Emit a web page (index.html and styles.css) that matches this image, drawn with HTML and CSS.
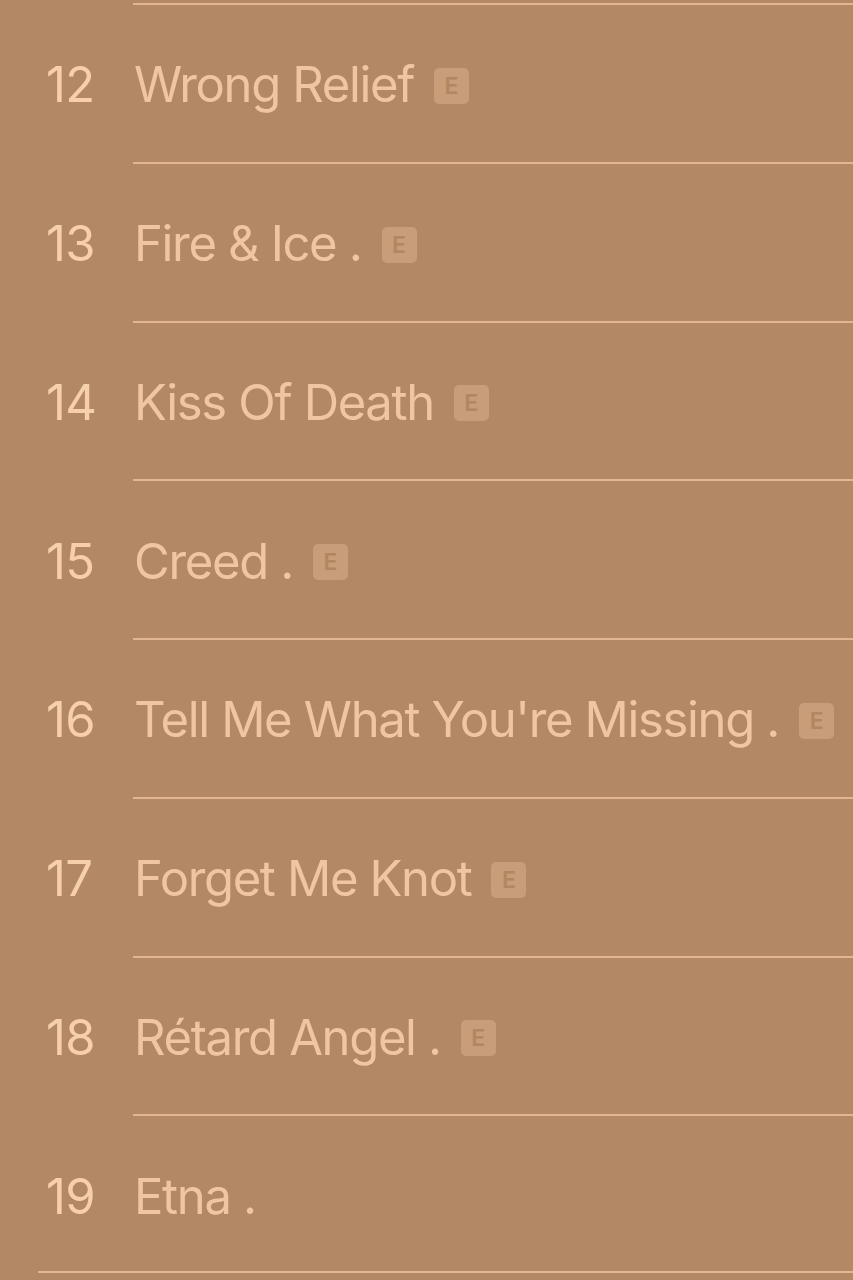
FILE: index.html
```html
<!DOCTYPE html>
<html lang="en">
<head>
  <meta charset="UTF-8" />
  <meta name="viewport" content="width=device-width, initial-scale=1.0">
  <title>Tracks</title>
  <link rel="stylesheet" href="styles.css">
</head>
<body>
  <ul class="tracks">
    <li class="track">
      <span class="num">12</span>
      <span class="title">Wrong Relief</span>
      <span class="explicit">E</span>
    </li>
    <li class="track">
      <span class="num">13</span>
      <span class="title">Fire &amp; Ice .</span>
      <span class="explicit">E</span>
    </li>
    <li class="track">
      <span class="num">14</span>
      <span class="title">Kiss Of Death</span>
      <span class="explicit">E</span>
    </li>
    <li class="track">
      <span class="num">15</span>
      <span class="title">Creed .</span>
      <span class="explicit">E</span>
    </li>
    <li class="track">
      <span class="num">16</span>
      <span class="title">Tell Me What You're Missing .</span>
      <span class="explicit">E</span>
    </li>
    <li class="track">
      <span class="num">17</span>
      <span class="title">Forget Me Knot</span>
      <span class="explicit">E</span>
    </li>
    <li class="track">
      <span class="num">18</span>
      <span class="title">Rétard Angel .</span>
      <span class="explicit">E</span>
    </li>
    <li class="track last">
      <span class="num">19</span>
      <span class="title">Etna .</span>
    </li>
  </ul>
</body>
</html>
```

FILE: styles.css
```css
html, body {
  margin: 0;
  background: #b38864;
}

body {
  font-family: Inter, "Noto Sans", sans-serif;
  color: #eec7a2;
  padding-top: 3px;
}

.tracks {
  list-style: none;
  margin: 0;
  padding: 0;
}

.track {
  position: relative;
  display: flex;
  align-items: center;
  height: 158.75px;
  box-sizing: border-box;
  padding: 5px 0 0 46px;
}

/* separator above each row, inset to the title column */
.track::before {
  content: "";
  position: absolute;
  top: 0;
  left: 133px;
  right: 0;
  height: 2px;
  background: #e1b690;
}

.track.last::after {
  content: "";
  position: absolute;
  bottom: 0;
  left: 38px;
  right: 0;
  height: 2px;
  background: #e1b690;
}

.num {
  width: 88px;
  flex: none;
  font-size: 49px;
  color: #f5d0ab;
  letter-spacing: -0.6px;
}

.title {
  font-size: 49px;
  letter-spacing: -1.35px;
  white-space: nowrap;
}

.explicit {
  flex: none;
  width: 35px;
  height: 36px;
  margin-left: 20px;
  margin-top: 2px;
  border-radius: 5px;
  background: #c89d79;
  color: #b18762;
  font-size: 23px;
  font-weight: 600;
  display: flex;
  align-items: center;
  justify-content: center;
}
```
